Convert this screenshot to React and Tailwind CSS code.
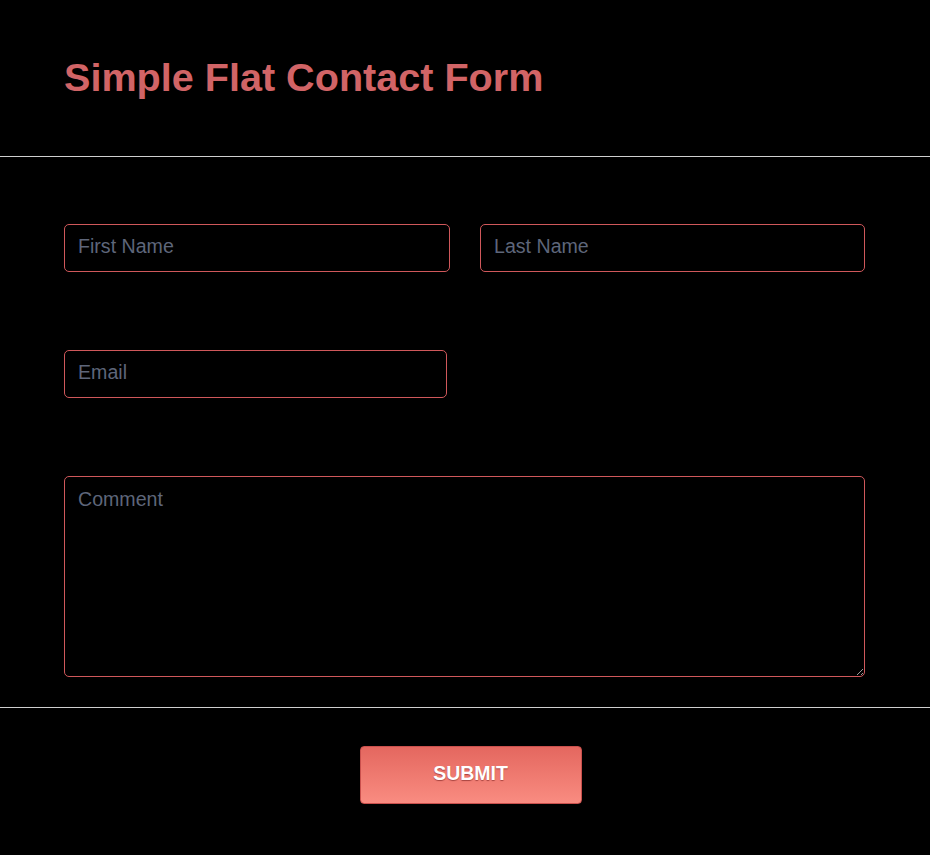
import React from "react";

const field =
  "h-12 rounded-[5px] border border-[#d0585b] bg-black px-[13px] pb-[3px] text-[19.6px] text-gray-200 placeholder:text-[#5e667a] outline-none";

function App() {
  return (
    <div className="min-h-[855px] w-full bg-black font-['Liberation_Sans',Arial,sans-serif]">
      {/* Header */}
      <header className="px-16 pt-[54px] pb-[56px]">
        <h1 className="text-[39.6px] font-bold leading-[46px] text-[#d16466]">
          Simple Flat Contact Form
        </h1>
      </header>
      <div className="h-px w-full bg-[#cfcfcf]" />

      {/* Fields */}
      <form className="px-16 pt-[67px] pb-[30px]">
        <div className="flex gap-[30px]">
          <input className={`${field} w-[386px]`} placeholder="First Name" />
          <input className={`${field} w-[385px]`} placeholder="Last Name" />
        </div>
        <div className="mt-[78px]">
          <input className={`${field} w-[383px]`} placeholder="Email" />
        </div>
        <div className="mt-[78px]">
          <textarea
            className="block h-[201px] w-[801px] rounded-[5px] border border-[#d0585b] bg-black px-[13px] pt-[8px] pb-[10px] text-[19.6px] text-gray-200 placeholder:text-[#5e667a] outline-none"
            placeholder="Comment"
          />
        </div>
      </form>
      <div className="h-px w-full bg-[#cfcfcf]" />

      {/* Footer */}
      <div className="flex justify-center pt-[38px] pb-[50px]">
        <button
          type="button"
          className="ml-[11px] h-[58px] w-[222px] rounded-[4px] border border-[#c9504d] bg-gradient-to-b from-[#e4675f] to-[#f98c81] pb-[3px] text-[19.5px] font-bold text-white [text-shadow:0_1px_1px_rgba(120,30,30,0.6)]"
        >
          SUBMIT
        </button>
      </div>
    </div>
  );
}

export default App;
